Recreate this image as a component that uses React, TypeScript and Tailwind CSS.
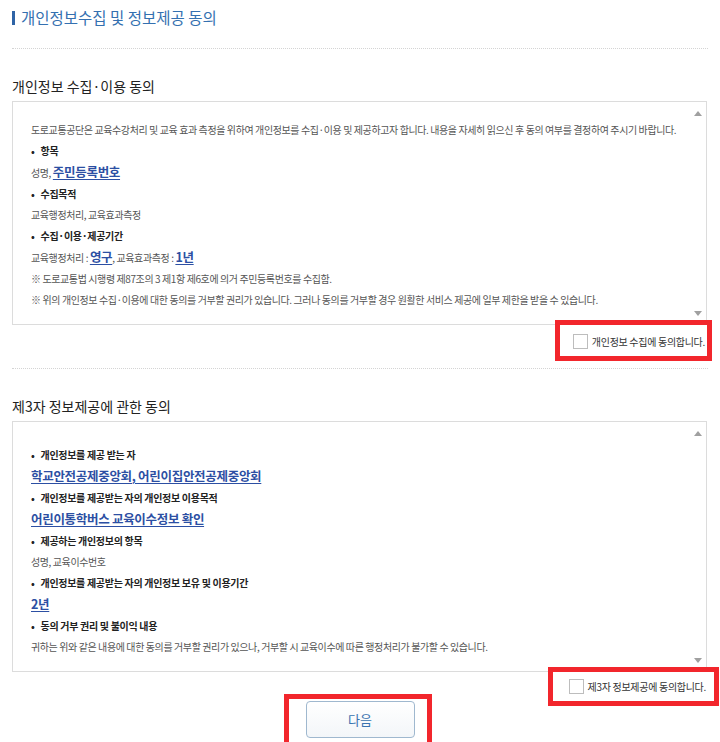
const FONT = "font-['Malgun_Gothic','Noto_Sans_CJK_KR',sans-serif]";

function ScrollArrows() {
  return (
    <div className="flex w-[16px] shrink-0 flex-col items-center justify-between pt-[9px] pb-[8px]">
      <svg width="8" height="5" viewBox="0 0 8 5">
        <polygon points="4,0 8,5 0,5" fill="#a0a0a0" />
      </svg>
      <svg width="8" height="5" viewBox="0 0 8 5">
        <polygon points="0,0 8,0 4,5" fill="#a0a0a0" />
      </svg>
    </div>
  );
}

function Bullet({ children }: { children: React.ReactNode }) {
  return (
    <p className="whitespace-nowrap text-[10px] font-bold tracking-[-0.3px] text-[#222]">
      <span className="mr-[6px]">•</span>
      {children}
    </p>
  );
}

function Body({ children }: { children: React.ReactNode }) {
  return <p className="whitespace-nowrap text-[10px] tracking-[-0.4px] text-[#555]">{children}</p>;
}

function Link({ children }: { children: React.ReactNode }) {
  return (
    <span className="text-[12.5px] font-bold tracking-[-0.3px] text-[#2c4fa3] underline underline-offset-[2px]">
      {children}
    </span>
  );
}

function Agree({ label, box }: { label: string; box: string }) {
  return (
    <label className="relative inline-flex items-center gap-[4px]">
      <span className="h-[15px] w-[15px] border border-[#bdbdbd] bg-white" />
      <span className="text-[10px] tracking-[-0.3px] text-[#333]">{label}</span>
      <span className={`pointer-events-none absolute border-[5px] border-[#f2262c] ${box}`} />
    </label>
  );
}

export default function App() {
  return (
    <div className={`h-[742px] w-[720px] overflow-hidden bg-white px-[12px] ${FONT}`}>
      <h1 className="mt-[8px] flex h-[20px] items-center gap-[6px] text-[15.5px] text-[#3470b0]">
        <span className="h-[14px] w-[3px] bg-[#2f64a6]" />
        개인정보수집 및 정보제공 동의
      </h1>

      <div className="mt-[20px] border-t border-dotted border-[#d4d4d4]" />

      <h2 className="mt-[27px] h-[20px] text-[14px] leading-[20px] text-[#222]">
        개인정보 수집·이용 동의
      </h2>

      <div className="mt-[5px] flex h-[224px] w-[695px] border border-[#dcdcdc]">
        <div className="flex-1 overflow-hidden pl-[18px] pt-[17px] leading-[21px]">
          <Body>
            도로교통공단은 교육수강처리 및 교육 효과 측정을 위하여 개인정보를 수집·이용 및 제공하고자 합니다.
            내용을 자세히 읽으신 후 동의 여부를 결정하여 주시기 바랍니다.
          </Body>
          <Bullet>항목</Bullet>
          <Body>
            성명, <Link>주민등록번호</Link>
          </Body>
          <Bullet>수집목적</Bullet>
          <Body>교육행정처리, 교육효과측정</Body>
          <Bullet>수집·이용·제공기간</Bullet>
          <Body>
            교육행정처리 : <Link>영구</Link>, 교육효과측정 : <Link>1년</Link>
          </Body>
          <Body>※ 도로교통법 시행령 제87조의 3 제1항 제6호에 의거 주민등록번호를 수집함.</Body>
          <Body>
            ※ 위의 개인정보 수집·이용에 대한 동의를 거부할 권리가 있습니다. 그러나 동의를 거부할 경우 원활한
            서비스 제공에 일부 제한을 받을 수 있습니다.
          </Body>
        </div>
        <ScrollArrows />
      </div>

      <div className="flex h-[33px] items-center justify-end pr-[3px]">
        <Agree label="개인정보 수집에 동의합니다." box="-left-[18px] -right-[7px] -top-[14px] -bottom-[12px]" />
      </div>

      <div className="mt-[10px] border-t border-dotted border-[#d4d4d4]" />

      <h2 className="mt-[27px] h-[20px] text-[14px] leading-[20px] text-[#222]">
        제3자 정보제공에 관한 동의
      </h2>

      <div className="mt-[5px] flex h-[251px] w-[695px] border border-[#dcdcdc]">
        <div className="flex-1 overflow-hidden pl-[18px] pt-[22px] leading-[21px]">
          <Bullet>개인정보를 제공 받는 자</Bullet>
          <Body>
            <Link>학교안전공제중앙회, 어린이집안전공제중앙회</Link>
          </Body>
          <Bullet>개인정보를 제공받는 자의 개인정보 이용목적</Bullet>
          <Body>
            <Link>어린이통학버스 교육이수정보 확인</Link>
          </Body>
          <Bullet>제공하는 개인정보의 항목</Bullet>
          <Body>성명, 교육이수번호</Body>
          <Bullet>개인정보를 제공받는 자의 개인정보 보유 및 이용기간</Bullet>
          <Body>
            <Link>2년</Link>
          </Body>
          <Bullet>동의 거부 권리 및 불이익 내용</Bullet>
          <Body>
            귀하는 위와 같은 내용에 대한 동의를 거부할 권리가 있으나, 거부할 시 교육이수에 따른 행정처리가 불가할 수
            있습니다.
          </Body>
        </div>
        <ScrollArrows />
      </div>

      <div className="flex h-[29px] items-center justify-end pr-[2px]">
        <Agree label="제3자 정보제공에 동의합니다." box="-left-[21px] -right-[13px] -top-[12px] -bottom-[12px]" />
      </div>

      <div className="flex justify-center">
        <div className="relative">
          <button className="h-[37px] w-[109px] rounded-[4px] border border-[#9fb8cf] bg-gradient-to-b from-white to-[#f3f6f9] text-[13px] text-[#3a73b0]">
            다음
          </button>
          <span className="pointer-events-none absolute -left-[22px] -right-[17px] -top-[7px] -bottom-[12px] border-[5px] border-[#f2262c]" />
        </div>
      </div>
    </div>
  );
}
